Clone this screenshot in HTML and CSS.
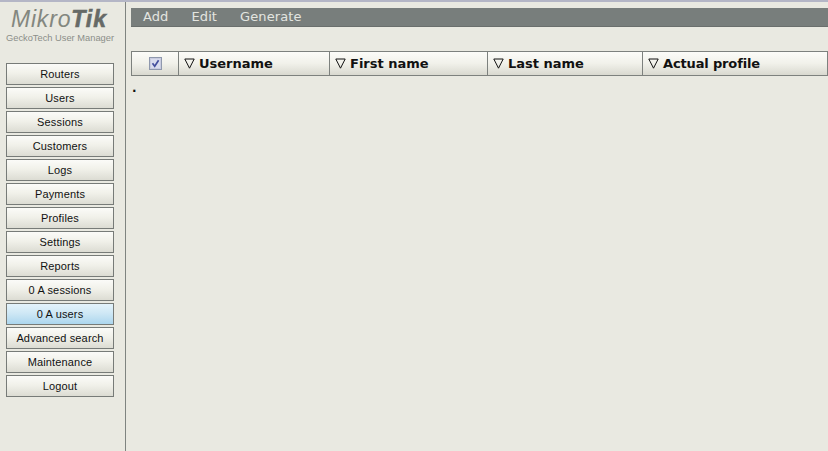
FILE: index.html
```html
<!DOCTYPE html>
<html lang="en">
<head>
<meta charset="utf-8">
<title>GeckoTech User Manager</title>
<link rel="stylesheet" href="styles.css">
</head>
<body>
<div class="page">
  <aside class="sidebar">
    <div class="logo">
      <div class="logo-mark"><span class="logo-light">Mikro</span><span class="logo-bold">Tik</span></div>
      <div class="logo-sub">GeckoTech User Manager</div>
    </div>
    <nav class="menu">
      <a class="btn">Routers</a>
      <a class="btn">Users</a>
      <a class="btn">Sessions</a>
      <a class="btn">Customers</a>
      <a class="btn">Logs</a>
      <a class="btn">Payments</a>
      <a class="btn">Profiles</a>
      <a class="btn">Settings</a>
      <a class="btn">Reports</a>
      <a class="btn">0 A sessions</a>
      <a class="btn btn-active">0 A users</a>
      <a class="btn">Advanced search</a>
      <a class="btn">Maintenance</a>
      <a class="btn">Logout</a>
    </nav>
  </aside>
  <main class="content">
    <div class="toolbar">
      <span class="tool">Add</span>
      <span class="tool">Edit</span>
      <span class="tool">Generate</span>
    </div>
    <div class="thead">
      <div class="th th-check">
        <svg class="check" width="13" height="13" viewBox="0 0 13 13"><rect x="0.5" y="0.5" width="12" height="12" fill="#c9cce0" stroke="#8f98ad"/><rect x="2" y="2" width="9" height="9" fill="#d9dcee"/><path d="M3.5 6.2 L5.7 9.2 L9.6 3.2" fill="none" stroke="#444f9e" stroke-width="1.7"/></svg>
      </div>
      <div class="th th-user"><svg class="tri" width="11" height="11" viewBox="0 0 11 11"><path d="M0.8 1 H10.2 L5.5 10.2 Z" fill="none" stroke="#111" stroke-width="1"/></svg><span>Username</span></div>
      <div class="th th-first"><svg class="tri" width="11" height="11" viewBox="0 0 11 11"><path d="M0.8 1 H10.2 L5.5 10.2 Z" fill="none" stroke="#111" stroke-width="1"/></svg><span>First name</span></div>
      <div class="th th-last"><svg class="tri" width="11" height="11" viewBox="0 0 11 11"><path d="M0.8 1 H10.2 L5.5 10.2 Z" fill="none" stroke="#111" stroke-width="1"/></svg><span>Last name</span></div>
      <div class="th th-profile"><svg class="tri" width="11" height="11" viewBox="0 0 11 11"><path d="M0.8 1 H10.2 L5.5 10.2 Z" fill="none" stroke="#111" stroke-width="1"/></svg><span>Actual profile</span></div>
    </div>
    <div class="dot">.</div>
  </main>
</div>
</body>
</html>
```
FILE: styles.css
```css
html, body {
  margin: 0;
  padding: 0;
  height: 100%;
  overflow: hidden;
}
body {
  background: #e9e9e1;
  font-family: "Liberation Sans", Arial, sans-serif;
  color: #111;
}
.page {
  display: flex;
  height: 451px;
  border-top: 2px solid #b4b6c6;
  box-sizing: border-box;
}
.sidebar {
  flex: none;
  box-sizing: border-box;
  width: 126px;
  border-right: 1px solid #7f8480;
  padding-left: 6px;
}
.logo {
  width: 108px;
  height: 61px;
}
.logo-mark {
  padding: 4px 0 0 5px;
  height: 26px;
  line-height: 26px;
  font-size: 23px;
  font-style: italic;
  white-space: nowrap;
}
.logo-light {
  font-weight: 400;
  color: #83877f;
  letter-spacing: 0.8px;
}
.logo-bold {
  font-weight: 700;
  color: #666a67;
  letter-spacing: 1px;
  -webkit-text-stroke: 0.6px #666a67;
}
.logo-sub {
  font-size: 9.3px;
  line-height: 13px;
  color: #8b8e89;
  white-space: nowrap;
}
.menu {
  display: flex;
  flex-direction: column;
  gap: 2px;
}
.btn {
  display: block;
  box-sizing: border-box;
  width: 108px;
  height: 22px;
  line-height: 21px;
  text-align: center;
  font-size: 11px;
  letter-spacing: 0.15px;
  color: #111;
  border: 1px solid #777b78;
  background: linear-gradient(#fbfbf8 0%, #f1f1ea 45%, #dcdcd3 100%);
}
.btn-active {
  background: linear-gradient(#e4f3fb 0%, #cfe8f5 45%, #acd6ee 100%);
}
.content {
  flex: 1;
  min-width: 0;
  padding: 6px 0 0 5px;
}
.toolbar {
  display: flex;
  height: 19px;
  padding: 0 0 1px 12px;
  gap: 23px;
  background: #787e7c;
  border-bottom: 1px solid #6a6f6d;
  box-sizing: border-box;
  align-items: center;
  font-family: "DejaVu Sans", Verdana, sans-serif;
  font-size: 13px;
  letter-spacing: 0.1px;
  color: #e3e5e0;
}
.thead {
  display: flex;
  height: 25px;
  margin-top: 24px;
  box-sizing: border-box;
  border: 1px solid #7d817e;
  background: linear-gradient(#fcfcf9 0%, #f1f1ea 50%, #d9d9d0 100%);
  font-family: "DejaVu Sans", Verdana, sans-serif;
  font-size: 13px;
  font-weight: 700;
  color: #111;
}
.th {
  display: flex;
  align-items: center;
  box-sizing: border-box;
  border-right: 1px solid #7d817e;
  padding-left: 5px;
  gap: 4px;
  white-space: nowrap;
}
.th-check {
  width: 47px;
  justify-content: center;
  padding-left: 0;
}
.th-user { width: 151px; }
.th-first { width: 158px; }
.th-last { width: 155px; }
.th-profile { flex: 1; border-right: 0; letter-spacing: -0.15px; }
.tri, .check {
  flex: none;
}
.dot {
  font-family: "DejaVu Sans", Verdana, sans-serif;
  font-size: 12px;
  font-weight: 700;
  line-height: 16px;
  padding: 4px 0 0 1px;
}
```
